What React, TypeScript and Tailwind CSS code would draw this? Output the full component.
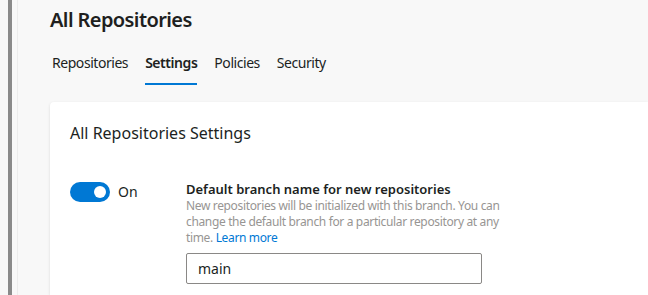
export default function App() {
  return (
    <div
      className="flex h-[295px] w-[648px] overflow-hidden bg-[#f8f8f8] text-[#201f1e]"
      style={{ fontFamily: '"Segoe UI", "Noto Sans", sans-serif' }}
    >
      {/* left rail */}
      <div className="ml-[8px] w-[4px] shrink-0 bg-[#8a8a8a]" />
      <div className="ml-[5px] w-px shrink-0 bg-[#ececec]" />

      <div className="flex min-w-0 flex-1 flex-col pl-[32px]">
        <h1 className="mt-[6px] text-[20px] font-semibold leading-[28px] tracking-[-0.6px]">All Repositories</h1>

        <div className="mt-[19px] flex gap-[17px] text-[14px] leading-[20px] tracking-[-0.45px]">
          <div className="pb-[12px] pl-[2px]">Repositories</div>
          <div className="border-b-[2px] border-[#0078d4] pb-[10px] font-semibold">Settings</div>
          <div className="pb-[12px]">Policies</div>
          <div className="pb-[12px]">Security</div>
        </div>

        <div className="mt-[17px] flex-1 rounded-tl-[4px] bg-white pl-[20px] pt-[20px] shadow-[0_1px_3px_rgba(0,0,0,0.12)]">
          <h2 className="text-[16px] leading-[22px]">All Repositories Settings</h2>

          <div className="mt-[36px] flex">
            <div className="flex w-[116px] shrink-0 items-center gap-[8px] self-start pt-[2px]">
              <div className="flex h-[20px] w-[40px] items-center justify-end rounded-full bg-[#0078d4] pr-[4px]">
                <div className="h-[12px] w-[12px] rounded-full bg-white" />
              </div>
              <span className="text-[14px] leading-[20px]">On</span>
            </div>

            <div className="w-[322px]">
              <div className="text-[13px] font-semibold leading-[18px]">
                Default branch name for new repositories
              </div>
              <p className="text-[12px] leading-[16px] tracking-[-0.35px] text-[#979593]">
                New repositories will be initialized with this branch. You can change the default branch for a
                particular repository at any time. <span className="text-[#0078d4]">Learn more</span>
              </p>
              <div className="mt-[7px] flex h-[31px] w-[296px] items-center rounded-[2px] border border-[#8a8886] px-[11px] text-[14px]">
                main
              </div>
            </div>
          </div>
        </div>
      </div>
    </div>
  );
}
